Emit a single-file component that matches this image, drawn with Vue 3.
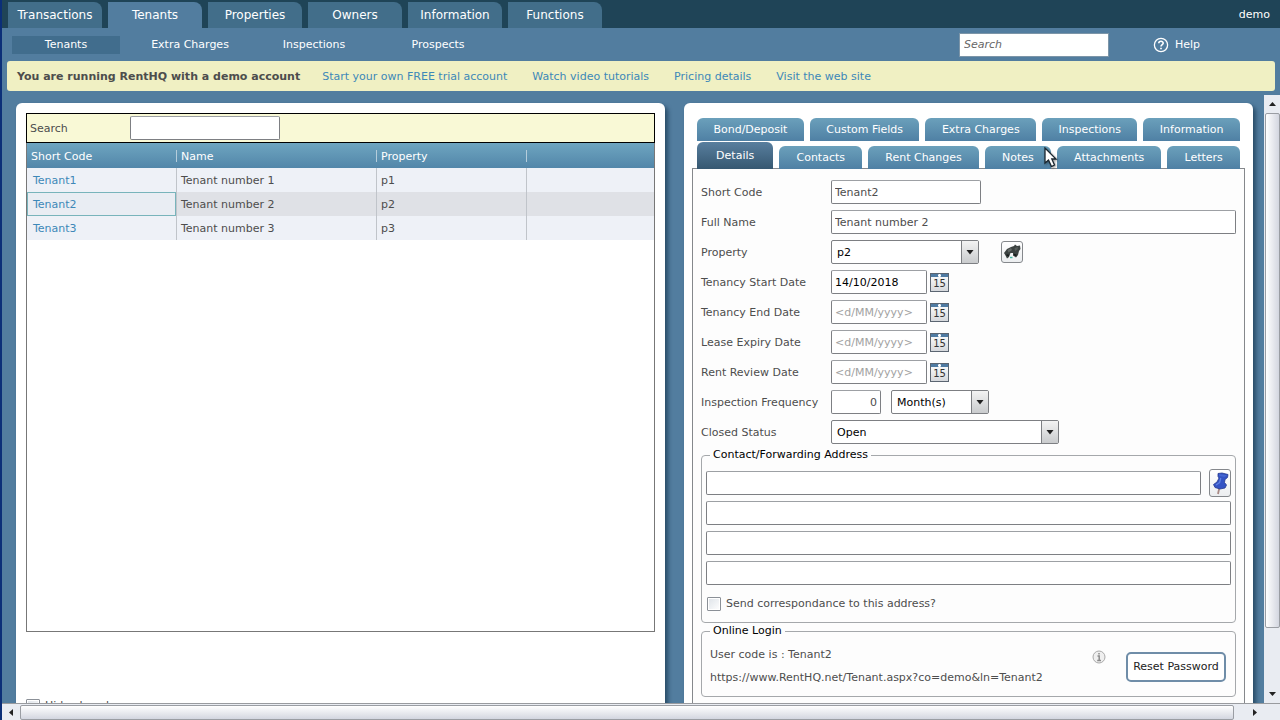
<script setup>
import { ref } from 'vue'

const mainTabs = ['Transactions', 'Tenants', 'Properties', 'Owners', 'Information', 'Functions']
const subTabs = ['Tenants', 'Extra Charges', 'Inspections', 'Prospects']
const bannerLinks = ['Start your own FREE trial account', 'Watch video tutorials', 'Pricing details', 'Visit the web site']
const tenants = [
  { code: 'Tenant1', name: 'Tenant number 1', property: 'p1' },
  { code: 'Tenant2', name: 'Tenant number 2', property: 'p2' },
  { code: 'Tenant3', name: 'Tenant number 3', property: 'p3' }
]
const backTabs = ['Bond/Deposit', 'Custom Fields', 'Extra Charges', 'Inspections', 'Information']
const frontTabs = ['Details', 'Contacts', 'Rent Changes', 'Notes', 'Attachments', 'Letters']
const dates = ref([
  { id: 'start', label: 'Tenancy Start Date', value: '14/10/2018' },
  { id: 'end', label: 'Tenancy End Date', value: '' },
  { id: 'expiry', label: 'Lease Expiry Date', value: '' },
  { id: 'review', label: 'Rent Review Date', value: '' }
])
const shortCode = ref('Tenant2')
const fullName = ref('Tenant number 2')
const frequency = ref('0')
</script>

<template>
  <div class="app">
    <header class="top">
      <nav class="main-tabs">
        <a v-for="t in mainTabs" :key="t" href="#" :class="{ active: t === 'Tenants' }">{{ t }}</a>
      </nav>
      <span class="user">demo</span>
    </header>

    <div class="sub">
      <nav class="sub-tabs">
        <a v-for="t in subTabs" :key="t" href="#" :class="{ active: t === 'Tenants' }">{{ t }}</a>
      </nav>
      <input class="global-search" type="text" placeholder="Search" aria-label="Search everything">
      <a class="help" href="#">
        <svg width="16" height="16" viewBox="0 0 16 16" fill="none" stroke="#fff">
          <circle cx="8" cy="8" r="6.6" stroke-width="1.3" />
          <path d="M5.8 6.3C5.8 3.6 10.3 3.7 10.2 6.2C10.1 7.7 8 7.6 8 9.6" stroke-width="1.6" />
          <path d="M8 10.8V12.3" stroke-width="1.7" />
        </svg>
        Help
      </a>
    </div>

    <div class="banner">
      <strong>You are running RentHQ with a demo account</strong>
      <a v-for="l in bannerLinks" :key="l" href="#">{{ l }}</a>
    </div>

    <div class="viewport">
      <main class="work">
        <section class="panel list">
          <div class="filter">
            <label for="filter">Search</label>
            <input id="filter" class="box" type="text">
          </div>
          <div class="grid-box">
            <table>
              <thead>
                <tr>
                  <th class="c-code">Short Code</th>
                  <th class="c-name">Name</th>
                  <th class="c-prop">Property</th>
                  <th></th>
                </tr>
              </thead>
              <tbody>
                <tr v-for="t in tenants" :key="t.code" :class="{ selected: t.code === 'Tenant2' }">
                  <td><a href="#">{{ t.code }}</a></td>
                  <td>{{ t.name }}</td>
                  <td>{{ t.property }}</td>
                  <td></td>
                </tr>
              </tbody>
            </table>
          </div>
          <label class="hide-closed"><input class="tick" type="checkbox"><span>Hide closed</span></label>
        </section>

        <section class="panel detail">
          <div class="tab-row back">
            <button v-for="t in backTabs" :key="t" type="button">{{ t }}</button>
          </div>
          <div class="tab-row front">
            <button v-for="t in frontTabs" :key="t" type="button" :class="{ active: t === 'Details' }">{{ t }}</button>
          </div>

          <form class="body" @submit.prevent>
            <div class="row">
              <label for="short">Short Code</label>
              <input id="short" v-model="shortCode" class="box w-code" type="text">
            </div>
            <div class="row">
              <label for="full">Full Name</label>
              <input id="full" v-model="fullName" class="box grow" type="text">
            </div>
            <div class="row">
              <label for="prop">Property</label>
              <span class="select w-prop">
                <select id="prop"><option>p2</option></select>
                <span class="arrow"><svg width="8" height="5" viewBox="0 0 8 5"><path d="M0.5 0H7.5L4 4.5Z" fill="#222" /></svg></span>
              </span>
              <button class="tool find" type="button" aria-label="Find property">
                <svg width="20" height="20" viewBox="0 0 20 20">
                  <path d="M2 11L5 7L9 5L12 4L13 2.5L15 4L18 3.5L18.5 7L17 9L16 13L14 15.5L11 13.5L11 11L8.5 11L7 15L5 16.5L3.5 13.5Z" fill="#3c4241" />
                  <path d="M5.5 8L9 6L10 8L6.5 10.5Z" fill="#626866" />
                  <path d="M12.5 6L16 5L15.5 7.5L13 9Z" fill="#565c5a" />
                  <path d="M4.5 13L7 13.5M12 12.5L14.5 13.5" stroke="#161b1a" stroke-width="1.4" />
                  <path d="M8 15.5L10.5 15.5" stroke="#3fb79f" stroke-width="1.4" />
                </svg>
              </button>
            </div>
            <div v-for="d in dates" :key="d.id" class="row">
              <label :for="d.id">{{ d.label }}</label>
              <input :id="d.id" v-model="d.value" class="box w-date dark" type="text" placeholder="<d/MM/yyyy>">
              <button class="cal" type="button" :aria-label="'Pick ' + d.label">
                <span class="cal-top"></span><span class="cal-day">15</span>
              </button>
            </div>
            <div class="row">
              <label for="freq">Inspection Frequency</label>
              <input id="freq" v-model="frequency" class="box w-freq" type="text">
              <span class="select w-unit">
                <select aria-label="Frequency unit"><option>Month(s)</option></select>
                <span class="arrow"><svg width="8" height="5" viewBox="0 0 8 5"><path d="M0.5 0H7.5L4 4.5Z" fill="#222" /></svg></span>
              </span>
            </div>
            <div class="row">
              <label for="closed">Closed Status</label>
              <span class="select w-status">
                <select id="closed"><option>Open</option></select>
                <span class="arrow"><svg width="8" height="5" viewBox="0 0 8 5"><path d="M0.5 0H7.5L4 4.5Z" fill="#222" /></svg></span>
              </span>
            </div>

            <fieldset class="address">
              <legend>Contact/Forwarding Address</legend>
              <div class="line">
                <input class="box grow" type="text" aria-label="Address line 1">
                <button class="tool pin" type="button" aria-label="Show on map">
                  <svg width="18" height="24" viewBox="0 0 18 24">
                    <path d="M8.5 16L7 23" stroke="#a98a86" stroke-width="1.8" />
                    <path d="M7 2.5L11 2L17 3.5L16.5 6.5L14 8.5L13.5 11.5L15.5 14L14 17L9 18L4 16.5L2.5 13.5L6 11L8 7L7 5.5Z" fill="#3453c4" stroke="#24388f" stroke-width="0.8" />
                    <path d="M8 3L16 4.3L13.5 6L8.5 5Z" fill="#4667d2" />
                    <path d="M9.8 7L8.6 11.5L5 14" fill="none" stroke="#5f80e2" stroke-width="1.3" />
                  </svg>
                </button>
              </div>
              <input v-for="n in 3" :key="n" class="box full" type="text" :aria-label="'Address line ' + (n + 1)">
              <label class="send"><input class="tick" type="checkbox"><span>Send correspondance to this address?</span></label>
            </fieldset>

            <fieldset class="login">
              <legend>Online Login</legend>
              <div class="login-row">
                <div class="login-text">
                  <span>User code is : Tenant2</span>
                  <span>https://www.RentHQ.net/Tenant.aspx?co=demo&amp;ln=Tenant2</span>
                </div>
                <svg class="info" width="14" height="14" viewBox="0 0 14 14">
                  <circle cx="7" cy="7" r="6" fill="#efefef" stroke="#a9a9a9" />
                  <path d="M7 3V4.6M5.5 6H7.2V10.3M5.2 10.5H9" fill="none" stroke="#8b8b8b" stroke-width="1.5" />
                </svg>
                <button class="reset" type="button">Reset Password</button>
              </div>
            </fieldset>
          </form>
        </section>
      </main>

      <div class="vbar">
        <svg class="end" width="7" height="4" viewBox="0 0 7 4"><path d="M0 4H7L3.5 0Z" fill="#222" /></svg>
        <div class="track"><div class="thumb"></div></div>
        <svg class="end" width="7" height="4" viewBox="0 0 7 4"><path d="M0 0H7L3.5 4Z" fill="#222" /></svg>
      </div>
    </div>

    <div class="hbar">
      <svg class="end" width="4" height="7" viewBox="0 0 4 7"><path d="M4 0V7L0 3.5Z" fill="#222" /></svg>
      <div class="track"><div class="thumb"></div></div>
      <svg class="end" width="4" height="7" viewBox="0 0 4 7"><path d="M0 0V7L4 3.5Z" fill="#222" /></svg>
    </div>

    <svg class="pointer" width="14" height="21" viewBox="0 0 14 21">
      <path d="M1 1V16L4.5 13L7.5 19.5L10.5 18L7.8 12H12Z" fill="#fff" stroke="#1b2730" stroke-width="1.3" />
    </svg>
  </div>
</template>

<style>
html,
body {
  margin: 0;
  background: #527d9f;
}
</style>

<style scoped>
.app,
.app * {
  box-sizing: border-box;
}

.app {
  position: relative;
  display: flex;
  flex-direction: column;
  height: 100vh;
  overflow: hidden;
  border-left: 2px solid #0b2f78;
  background: #527d9f;
  color: #4d4d4d;
  font: 11px/14px Verdana, "DejaVu Sans", sans-serif;
}

input,
select,
button {
  margin: 0;
  font: inherit;
  color: inherit;
}

a {
  color: #3d88b8;
  text-decoration: none;
}

.top {
  display: flex;
  justify-content: space-between;
  height: 28px;
  padding: 2px 10px 0 6px;
  background: #1f4457;
  color: #fff;
}

.main-tabs {
  display: flex;
  gap: 6px;
}

.main-tabs a {
  width: 94px;
  border-radius: 0 8px 0 0;
  background: #426e8a;
  color: #fff;
  font-size: 12px;
  line-height: 26px;
  text-align: center;
}

.main-tabs a.active {
  background: #527d9f;
}

.user {
  line-height: 26px;
}

.sub {
  display: flex;
  align-items: center;
  height: 33px;
  padding: 0 80px 0 10px;
}

.sub-tabs {
  display: flex;
  flex: 1;
  gap: 16px;
}

.sub-tabs a {
  width: 108px;
  color: #fff;
  line-height: 18px;
  text-align: center;
}

.sub-tabs a.active {
  background: #416d8d;
}

.global-search {
  width: 150px;
  height: 24px;
  padding: 0 4px;
  border: 1px solid #7c95a8;
  background: #fff;
}

.global-search::placeholder {
  color: #666;
  font-style: italic;
  opacity: 1;
}

.help {
  display: flex;
  align-items: center;
  gap: 6px;
  margin-left: 44px;
  color: #fff;
}

.banner {
  display: flex;
  flex: none;
  align-items: center;
  gap: 25px;
  height: 30px;
  margin: 0 5px;
  padding: 2px 10px 0;
  border-radius: 3px;
  background: #f0f0c3;
}

.banner strong {
  margin-right: -3px;
}

.viewport {
  display: flex;
  flex: 1;
  min-height: 0;
  padding-top: 4px;
}

.work {
  display: grid;
  flex: 1;
  grid-template-columns: 649fr 569fr;
  gap: 19px;
  min-width: 0;
  overflow: hidden;
  padding: 8px 11px 0 14px;
}

.panel {
  min-width: 0;
  height: 660px;
  border-radius: 6px;
  background: #fff;
  box-shadow: 3px 3px 4px rgba(20, 50, 75, 0.65);
}

.list {
  padding: 10px;
}

.filter {
  display: flex;
  align-items: center;
  height: 30px;
  padding: 0 3px;
  border: 1px solid #000;
  background: #f9f9d6;
}

.filter label {
  width: 100px;
  padding-top: 2px;
}

.box {
  height: 24px;
  min-width: 0;
  padding: 0 3px;
  border: 1px solid #7d7f83;
  border-top-color: #9da0a4;
  border-radius: 2px;
  background: #fff;
}

.filter .box {
  width: 150px;
}

.grid-box {
  height: 489px;
  border: 1px solid #777;
  border-top: 0;
}

table {
  width: 100%;
  border-collapse: separate;
  border-spacing: 0;
  table-layout: fixed;
}

th {
  height: 25px;
  padding: 2px 4px 0;
  background: linear-gradient(90deg, transparent calc(100% - 1px), #b5cddb 0) 0 7px / 100% 12px no-repeat;
  color: #fff;
  font-weight: 400;
  text-align: left;
}

thead tr {
  background: linear-gradient(#6ea5c0, #5286a9);
}

th:last-child {
  background: none;
}

.c-code,
.c-prop {
  width: 150px;
}

.c-name {
  width: 200px;
}

td {
  height: 24px;
  padding: 1px 4px 0;
  border-right: 1px solid #c0c4ca;
  background: #eef1f7;
}

td:last-child {
  border-right: 0;
}

td:first-child {
  padding-left: 6px;
}

.selected td {
  background: #dfe1e6;
}

.selected td:first-child {
  background: #e9edf3;
  box-shadow: inset 0 0 0 1px #78b4bb;
}

.hide-closed,
.send {
  display: flex;
  align-items: center;
  gap: 5px;
}

.hide-closed {
  margin-top: 67px;
}

.tick {
  width: 14px;
  height: 14px;
  border: 1px solid #8b9097;
  border-radius: 1px;
  appearance: none;
  background: linear-gradient(135deg, #dde2e8, #fff);
  box-shadow: inset 0 0 0 1px #fff;
}

.detail {
  padding: 15px 8px 0;
}

.tab-row {
  display: flex;
  align-items: flex-end;
  gap: 6px;
  padding: 0 5px;
}

.tab-row button {
  flex: 1 1 auto;
  height: 23px;
  padding: 1px 12px 0;
  border: 0;
  border-radius: 6px 6px 0 0;
  background: linear-gradient(#6ba0bb, #4f80a4);
  color: #fff;
  white-space: nowrap;
}

.tab-row .active {
  height: 27px;
  padding: 1px 14px 0;
  background: linear-gradient(#587e9e, #365871);
}

.front {
  margin-top: 1px;
}

.body {
  height: 560px;
  margin-top: -1px;
  padding: 11px 8px 0;
  border: 1px solid #85888c;
  background: #fdfdfd;
}

.row {
  display: flex;
  align-items: center;
  height: 24px;
  margin-bottom: 6px;
}

.row > label {
  width: 130px;
  padding-top: 2px;
}

.grow {
  flex: 1;
}

.w-code {
  width: 150px;
}

.w-date {
  width: 96px;
}

.w-freq {
  width: 50px;
  margin-right: 10px;
  text-align: right;
}

.dark {
  color: #000;
}

.dark::placeholder {
  color: #a2a2a2;
  opacity: 1;
}

.select {
  position: relative;
  height: 24px;
}

.select select {
  width: 100%;
  height: 24px;
  padding: 1px 5px 0;
  border: 1px solid #7d7f83;
  border-radius: 2px;
  appearance: none;
  background: #fff;
  color: #000;
}

.arrow {
  position: absolute;
  top: 1px;
  right: 1px;
  bottom: 1px;
  display: flex;
  align-items: center;
  justify-content: center;
  width: 17px;
  border-left: 1px solid #7d7f83;
  background: linear-gradient(#f3f3f3, #c9cbcd);
  pointer-events: none;
}

.w-prop {
  width: 148px;
}

.w-unit {
  width: 98px;
}

.w-status {
  width: 228px;
}

.tool {
  display: flex;
  align-items: center;
  justify-content: center;
  width: 22px;
  padding: 0;
  border: 1px solid #85888c;
  border-radius: 3px;
  background: linear-gradient(#fff, #eceef0);
}

.find {
  height: 22px;
  margin-left: 22px;
}

.pin {
  height: 28px;
  margin: -2px 0;
}

.cal {
  display: flex;
  flex-direction: column;
  width: 19px;
  height: 19px;
  margin-left: 3px;
  padding: 0;
  border: 1px solid #5b6571;
  background: linear-gradient(#fff, #d5d8dc);
}

.cal-top {
  width: 100%;
  height: 4px;
  background: radial-gradient(circle at 50% 50%, #fff 1px, #4f7ba3 2px);
}

.cal-day {
  width: 100%;
  color: #333;
  font-size: 10px;
  line-height: 14px;
  text-align: center;
}

fieldset {
  min-width: 0;
  margin: 0;
  padding: 0 4px;
  border: 1px solid #a5a8ab;
  border-radius: 4px;
}

legend {
  margin-left: 4px;
  padding: 0 3px;
  color: #000;
}

.address {
  height: 175px;
  margin-top: -2px;
}

.line {
  display: flex;
  align-items: center;
  gap: 8px;
  height: 24px;
  margin-top: 9px;
}

.full {
  display: block;
  width: 100%;
  margin-top: 6px;
}

.send {
  margin: 12px 0 0 1px;
}

.login {
  height: 73px;
  margin-top: 1px;
}

.login-row {
  display: flex;
  height: 50px;
  padding: 0 5px 0 4px;
}

.login-text {
  display: flex;
  flex: 1;
  flex-direction: column;
  gap: 9px;
  padding-top: 10px;
  white-space: nowrap;
}

.info {
  margin: 12px 20px 0 0;
}

.reset {
  width: 100px;
  height: 30px;
  margin-top: 14px;
  padding: 0;
  border: 2px solid #6f8da8;
  border-radius: 5px;
  background: #fff;
  color: #222;
  white-space: nowrap;
}

.vbar {
  display: flex;
  flex-direction: column;
  align-items: center;
  width: 16px;
  background: #e9ecf2;
}

.vbar .end {
  flex: none;
  margin: 7px 0;
}

.track {
  flex: 1;
}

.vbar .track {
  width: 15px;
}

.vbar .thumb {
  height: 90%;
  border: 1px solid #9a9da3;
  border-radius: 2px;
  background: linear-gradient(90deg, #fff, #d3d6e0);
}

.hbar {
  display: flex;
  flex: none;
  align-items: center;
  height: 17px;
  padding-right: 16px;
  border-top: 1px solid #999b9f;
  background: #e9ecf2;
}

.hbar .end {
  flex: none;
  margin: 0 7px;
}

.hbar .thumb {
  width: 99%;
  height: 15px;
  border: 1px solid #9a9da3;
  border-radius: 2px;
  background: linear-gradient(#fff, #d3d6e0);
}

.pointer {
  position: absolute;
  top: 147px;
  left: 1042px;
  filter: drop-shadow(1px 1px 1px rgba(0, 0, 0, 0.4));
}
</style>
